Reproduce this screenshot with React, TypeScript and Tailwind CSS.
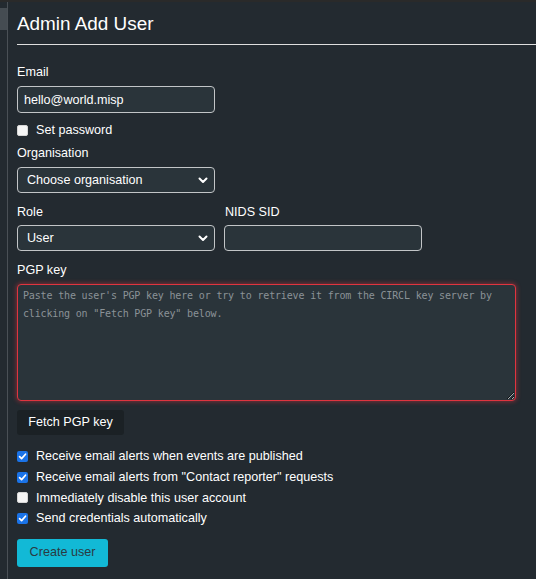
import React from "react";

const sans = "font-['Liberation_Sans',Arial,sans-serif]";

function Check({ checked }: { checked: boolean }) {
  return checked ? (
    <span className="flex h-[11px] w-[11px] shrink-0 items-center justify-center rounded-[2px] bg-[#1a73e8]">
      <svg width="9" height="9" viewBox="0 0 9 9" fill="none">
        <path d="M1.6 4.6 L3.6 6.6 L7.5 2.2" stroke="white" strokeWidth="1.7" strokeLinecap="round" strokeLinejoin="round" />
      </svg>
    </span>
  ) : (
    <span className="h-[11px] w-[11px] shrink-0 rounded-[2px] border border-[#d6d6d6] bg-[#f5f5f5]" />
  );
}

function CheckRow({ checked, label, className = "" }: { checked: boolean; label: string; className?: string }) {
  return (
    <label className={`flex items-center gap-[8px] text-[12.6px] leading-[18px] ${className}`}>
      <Check checked={checked} />
      <span>{label}</span>
    </label>
  );
}

function Select({ value }: { value: string }) {
  return (
    <div className="relative h-[26px] w-[198px]">
      <select
        defaultValue={value}
        className={`h-full w-full appearance-none rounded-[4px] border border-[#c2c5c7] bg-[#2a343a] pl-[9px] text-[12.6px] text-white outline-none ${sans}`}
      >
        <option>{value}</option>
      </select>
      <svg
        className="pointer-events-none absolute right-[7px] top-[10px]"
        width="10"
        height="7"
        viewBox="0 0 10 7"
        fill="none"
      >
        <path d="M1.5 1.5 L5 5 L8.5 1.5" stroke="white" strokeWidth="2" strokeLinecap="round" strokeLinejoin="round" />
      </svg>
    </div>
  );
}

export default function App() {
  return (
    <div className={`relative h-[579px] w-[536px] overflow-hidden bg-[#232a30] text-white ${sans}`}>
      <div className="h-[2px] bg-[#2a2a2a]" />
      <div className="flex h-[577px]">
        <div className="w-[7px]">
          <div className="mt-[6px] h-[22px] bg-[#454c52]" />
        </div>
        <div className="w-px bg-[#4a5056]" />
        <main className="flex flex-1 flex-col pl-[9px]">
          <h1 className="mt-[11px] text-[18.9px] leading-[22px]">Admin Add User</h1>
          <div className="mt-[9px] h-px bg-[#dedede]" />

          <label className="mt-[18px] text-[12.6px] leading-[18px]">Email</label>
          <input
            defaultValue="hello@world.misp"
            className={`mt-[5px] h-[27px] w-[198px] rounded-[4px] border border-[#c2c5c7] bg-[#2a343a] pl-[6px] text-[12.6px] text-white outline-none ${sans}`}
          />

          <CheckRow checked={false} label="Set password" className="mt-[8px]" />

          <label className="mt-[5px] text-[12.6px] leading-[18px]">Organisation</label>
          <div className="mt-[5px]">
            <Select value="Choose organisation" />
          </div>

          <div className="mt-[10px] flex gap-[9px]">
            <div className="flex flex-col">
              <label className="text-[12.6px] leading-[18px]">Role</label>
              <div className="mt-[4px]">
                <Select value="User" />
              </div>
            </div>
            <div className="flex flex-col">
              <label className="pl-px text-[12.6px] leading-[18px]">NIDS SID</label>
              <input
                className={`mt-[4px] h-[26px] w-[198px] rounded-[4px] border border-[#c2c5c7] bg-[#2a343a] pl-[6px] text-[12.6px] text-white outline-none ${sans}`}
              />
            </div>
          </div>

          <label className="mt-[10px] text-[12.6px] leading-[18px]">PGP key</label>
          <textarea
            placeholder={`Paste the user's PGP key here or try to retrieve it from the CIRCL key server by clicking on "Fetch PGP key" below.`}
            className="mt-[5px] h-[117px] w-[499px] rounded-[4px] border border-[#e0343f] bg-[#2a343a] px-[5px] pt-[2px] font-['DejaVu_Sans_Mono',monospace] text-[10px] leading-[18px] tracking-[-0.16px] text-white shadow-[0_0_4px_1px_rgba(224,52,63,0.45)] outline-none placeholder:text-[#8a9297]"
          />

          <button
            className={`mt-[9px] h-[25px] w-[107px] rounded-[3px] bg-[#1b2125] text-[12.6px] text-white ${sans}`}
          >
            Fetch PGP key
          </button>

          <div className="mt-[11px] flex flex-col">
            <CheckRow checked label="Receive email alerts when events are published" className="h-[20.7px]" />
            <CheckRow checked label={`Receive email alerts from "Contact reporter" requests`} className="h-[20.7px]" />
            <CheckRow checked={false} label="Immediately disable this user account" className="h-[20.7px]" />
            <CheckRow checked label="Send credentials automatically" className="h-[20.7px]" />
          </div>

          <button
            className={`mt-[10px] h-[28px] w-[91px] rounded-[3px] bg-[#12b9d6] text-[12.6px] text-[#2a3a42] ${sans}`}
          >
            Create user
          </button>
        </main>
      </div>
    </div>
  );
}
